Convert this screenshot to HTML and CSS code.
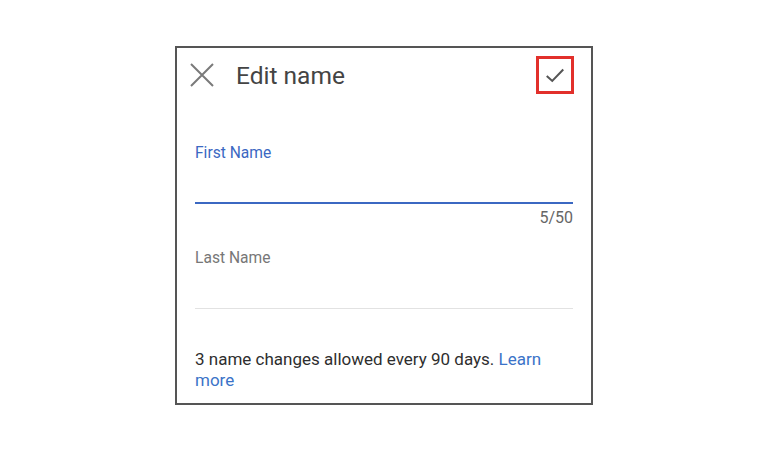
FILE: index.html
```html
<!DOCTYPE html>
<html lang="en">
<head>
  <meta charset="UTF-8">
  <meta name="viewport" content="width=device-width, initial-scale=1.0">
  <title>Edit name</title>
  <link rel="stylesheet" href="styles.css">
</head>
<body>

<div class="card">
  <div class="header">
    <svg class="close" width="24" height="24" viewBox="0 0 24 24">
      <path d="M1 1 L23 23 M23 1 L1 23" stroke="#7a7a7a" stroke-width="2" fill="none"/>
    </svg>
    <span class="title">Edit name</span>
    <div class="save">
      <svg width="22" height="22" viewBox="0 0 24 24">
        <path d="M3 13 L9 18.5 L21 6" stroke="#555" stroke-width="2.2" fill="none"/>
      </svg>
    </div>
  </div>

  <div class="field">
    <label class="label active" for="firstName">First Name</label>
    <input class="input active" type="text" id="firstName">
    <div class="counter">5/50</div>
  </div>

  <div class="field last">
    <label class="label" for="lastName">Last Name</label>
    <input class="input" type="text" id="lastName">
  </div>

  <p class="note">3 name changes allowed every 90 days. <a href="#">Learn more</a></p>
</div>

</body>
</html>
```

FILE: styles.css
```css
body {
  margin: 0;
  font-family: Roboto, "Liberation Sans", Arial, sans-serif;
  background: #fff;
}
.card {
  width: 418px;
  height: 359px;
  box-sizing: border-box;
  margin: 46px auto 0;
  border: 2px solid #555;
  background: #fff;
}
.header {
  display: flex;
  align-items: center;
  height: 54px;
  padding: 0 17px 0 13px;
}
.close {
  flex: none;
}
.title {
  margin-left: 22px;
  font-size: 24.5px;
  color: #444;
}
.save {
  margin-left: auto;
  width: 38px;
  height: 38px;
  box-sizing: border-box;
  border: 3px solid #e2302b;
  display: flex;
  align-items: center;
  justify-content: center;
}
.field {
  padding: 0 18px;
  margin-top: 42px;
}
.field.last {
  margin-top: 22px;
}
.label {
  display: block;
  font-size: 15.6px;
  line-height: 18px;
  color: #777;
}
.label.active {
  color: #3b68c2;
}
.input {
  display: block;
  width: 100%;
  height: 42px;
  box-sizing: border-box;
  border: none;
  border-bottom: 1px solid #e2e2e2;
  outline: none;
  background: transparent;
}
.input.active {
  height: 42px;
  border-bottom: 2px solid #3b68c2;
}
.counter {
  text-align: right;
  font-size: 16px;
  line-height: 18px;
  margin-top: 5px;
  color: #666;
}
.note {
  margin: 40px 0 0;
  padding: 0 18px;
  font-size: 17px;
  line-height: 21px;
  color: #2e2e2e;
}
.note a {
  color: #3b73c8;
  text-decoration: none;
}
```
